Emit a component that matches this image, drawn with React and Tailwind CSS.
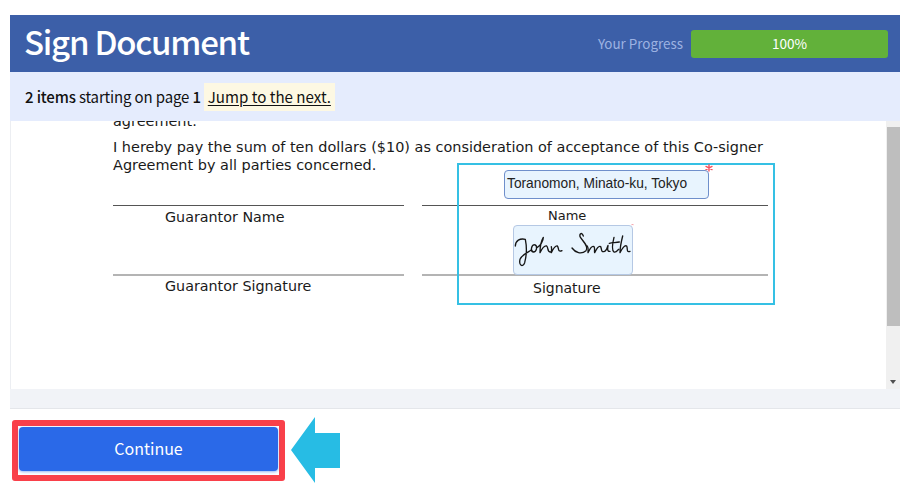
const App = () => {
  return (
    <div className="w-[913px] h-[493px] overflow-hidden bg-white pt-[15px] pl-[10px] font-['Noto_Sans_CJK_JP','Noto_Sans',sans-serif]">
      <div className="w-[890px]">
        <header className="h-[57px] bg-[#3c5fa8] flex items-center justify-between pl-[14px] pr-[12px]">
          <h1 className="text-[33px] leading-none font-medium text-white tracking-[-1.25px] -mt-[4px]">Sign Document</h1>
          <div className="flex items-center gap-[8px]">
            <span className="text-[13.4px] text-[#9db2e2]">Your Progress</span>
            <div className="w-[197px] h-[28px] rounded-[3px] bg-[#62b13a] flex items-center justify-center text-[13.6px] text-white">100%</div>
          </div>
        </header>

        <div className="h-[49px] bg-[#e5ecfd] flex items-center pl-[15px] text-[15px] text-[#111]">
          <span className="mt-[2px] tracking-[-0.15px]"><b className="font-medium">2 items</b> starting on page <b className="font-medium">1</b></span>
          <a className="ml-[3px] h-[28px] px-[4px] flex items-center bg-[#fdf8e3] underline underline-offset-2 text-[15.1px]">Jump to the next.</a>
        </div>

        <div className="flex h-[268px] border-l border-[#eceef2]">
          <div className="relative flex-1 overflow-hidden bg-white font-['DejaVu_Sans',sans-serif] text-[#1a1a1a]">
            <div className="-mt-[9px] pl-[102px] w-[780px] text-[14.45px] leading-[18px]">
              <p>agreement.</p>
              <p className="mt-[8px]">I hereby pay the sum of ten dollars ($10) as consideration of acceptance of this Co-signer Agreement by all parties concerned.</p>
            </div>

            <div className="grid grid-cols-[291px_346px] gap-x-[18px] ml-[102px] mt-[31px] text-[14.3px]">
              <div className="border-t border-[#555] pl-[52px] pt-[1px] leading-[20px]">Guarantor Name</div>
              <div className="border-t border-[#555] pl-[126px] pt-[1px] leading-[18px] text-[13px]">Name</div>
              <div className="border-t-2 border-[#b4b4b4] pl-[52px] mt-[47px] leading-[20px]">Guarantor Signature</div>
              <div className="border-t-2 border-[#b4b4b4] pl-[111px] pt-[2px] mt-[47px] leading-[20px] text-[14px]">Signature</div>
            </div>

            {/* form fields lying over the document */}
            <div className="absolute left-[446px] top-[42px] w-[318px] h-[142px] border-2 border-[#35c0e4]" />
            <div className="absolute left-[493px] top-[49px] w-[205px] h-[29px] rounded-[4px] border border-[#6f8fcb] bg-[#e8f4fe] pl-[2px] flex items-center font-['Liberation_Sans',sans-serif] text-[13.75px] text-[#222]">
              Toranomon, Minato-ku, Tokyo
            </div>
            <svg className="absolute left-[694px] top-[43px]" width="8" height="8" viewBox="0 0 8 8" stroke="#f6535f" strokeWidth="1.4" strokeLinecap="round">
              <path d="M4 .7V7M1 2.4L7 5.6M7 2.4L1 5.6" />
            </svg>
            <div className="absolute left-[502px] top-[104px] w-[120px] h-[50px] rounded-[4px] border border-[#b5c8e4] bg-[#e8f4fe]">
              <svg width="118" height="48" viewBox="12 12 354 144" fill="none" stroke="#151515" strokeWidth="4" strokeLinecap="round" strokeLinejoin="round" aria-label="signature">
                <path d="M16 72C16 56 30 48 46 52C50 72 50 100 44 122C38 138 26 130 30 112C36 98 52 92 64 84" />
                <path d="M74 68C64 68 60 88 70 90C80 90 84 72 74 68M82 76C90 72 100 58 100 46C94 56 90 78 90 92C96 80 104 70 110 72C116 76 110 90 122 90" />
                <path d="M124 74C126 80 124 88 124 92C130 80 136 70 142 72C148 78 142 92 156 86" />
                <path d="M186 78C196 92 214 98 228 86C238 72 216 56 210 44C208 34 216 30 220 42" />
                <path d="M232 72C236 78 234 86 234 92C240 80 246 70 252 74C256 80 252 88 254 92C260 80 266 70 272 74C276 82 272 92 284 88C290 84 292 78 294 70M294 72C292 80 292 90 300 88" />
                <path d="M312 46C308 62 304 84 312 90C318 92 322 86 326 82M298 64C308 62 320 62 328 60M338 42C334 58 330 78 330 92C336 80 344 68 350 72C354 80 348 92 360 88" />
              </svg>
            </div>
            <span className="absolute left-[620px] top-[103px] w-[3px] h-[2px] rounded-t-full border-t border-[#f5a0a8]" />
          </div>

          <div className="relative w-[14px] bg-[#f0f0f0] pt-[6px] pl-[1px]">
            <div className="h-[199px] bg-[#bebebe]" />
            <div className="absolute left-[4px] bottom-[5px] border-x-[3.5px] border-x-transparent border-t-[4px] border-t-[#505050]" />
          </div>
        </div>

        <div className="h-[20px] bg-[#f1f3f7] border-b border-[#e4e6ea]" />

        <div className="flex items-center pl-[2px] pt-[8px]">
          <div className="w-[273px] h-[61px] rounded-[3px] border-[6px] border-[#f9404a] pt-[1px] px-[1px] pb-[4px]">
            <button className="w-full h-full rounded-[4px] bg-[#2a69e8] text-white text-[16px] pb-[2px] shadow-[0_1px_3px_rgba(42,105,232,0.5)]">Continue</button>
          </div>
          <svg className="ml-[6px]" width="49" height="66" viewBox="0 0 49 66">
            <path d="M0 33L24 0V16H49V51H24V66Z" fill="#27bce4" />
          </svg>
        </div>
      </div>
    </div>
  );
};

export default App;
